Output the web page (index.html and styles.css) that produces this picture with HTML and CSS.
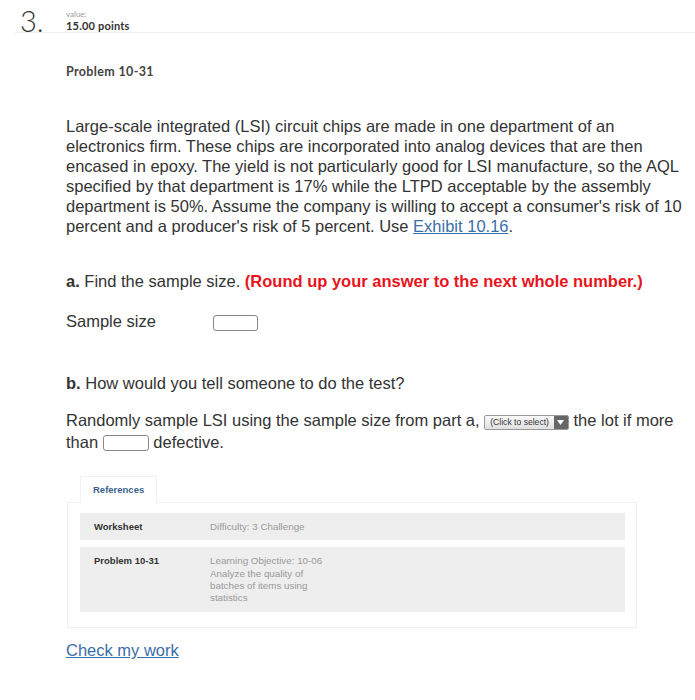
FILE: index.html
```html
<!DOCTYPE html>
<html>
<head>
<meta charset="utf-8">
<link rel="stylesheet" href="styles.css">
</head>
<body>
<div class="qhead">
  <div class="qnum">3.</div>
  <div class="qval">
    <div class="vlabel">value:</div>
    <div class="vpoints">15.00 points</div>
  </div>
</div>
<div class="main">
  <div class="ptitle">Problem 10-31</div>
  <p class="para">Large-scale integrated (LSI) circuit chips are made in one department of an electronics firm. These chips are incorporated into analog devices that are then encased in epoxy. The yield is not particularly good for LSI manufacture, so the AQL specified by that department is 17% while the LTPD acceptable by the assembly department is 50%. Assume the company is willing to accept a consumer's risk of 10 percent and a producer's risk of 5 percent. Use <a class="link" href="#">Exhibit 10.16</a>.</p>
  <p class="part"><b>a.</b> Find the sample size. <b class="red">(Round up your answer to the next whole number.)</b></p>
  <div class="srow"><span class="slabel">Sample size</span><span class="box box-a"></span></div>
  <p class="part partb"><b>b.</b> How would you tell someone to do the test?</p>
  <p class="para para2">Randomly sample LSI using the sample size from part a, <span class="sel"><span class="seltext">(Click to select)</span><span class="selbtn"><svg width="7" height="5" viewBox="0 0 7 5"><path d="M0 0h7L3.5 5z" fill="#fff"/></svg></span></span> the lot if more than <span class="box box-b"></span> defective.</p>
  <div class="refs">
    <div class="tab">References</div>
    <div class="refbox">
      <div class="refrow">
        <div class="rname">Worksheet</div>
        <div class="rinfo">Difficulty: 3 Challenge</div>
      </div>
      <div class="refrow">
        <div class="rname">Problem 10-31</div>
        <div class="rinfo">Learning Objective: 10-06<br>Analyze the quality of<br>batches of items using<br>statistics</div>
      </div>
    </div>
  </div>
  <a class="check" href="#">Check my work</a>
</div>
</body>
</html>
```
FILE: styles.css
```css
html, body { margin: 0; padding: 0; background: #fff; }
body { font-family: "Liberation Sans", Arial, sans-serif; color: #333; width: 695px; }
.qhead { display: flex; align-items: flex-start; margin-left: 15px; border-bottom: 1px solid #f0f0f0; height: 32px; }
.qnum { font-family: "Lato", sans-serif; font-weight: 300; font-size: 29px; line-height: 30px; color: #333; width: 51px; padding-left: 5px; margin-top: 6px; box-sizing: border-box; }
.qval { padding-top: 9px; }
.vlabel { font-family: "Lato", sans-serif; font-size: 8px; color: #999; line-height: 10px; }
.vpoints { font-family: "Lato", sans-serif; font-weight: 700; font-size: 11px; letter-spacing: 0.2px; color: #333; line-height: 13px; }
.main { padding-left: 66px; width: 620px; }
.ptitle { font-family: "Lato", sans-serif; font-weight: 700; font-size: 12.5px; letter-spacing: 0.35px; color: #444; margin-top: 32px; line-height: 14px; }
.para { font-size: 16.5px; line-height: 20px; margin: 37px 0 0; color: #333; }
.link { color: #3a6ea8; text-decoration: underline; }
.part { font-size: 16.5px; line-height: 20px; margin: 35px 0 0; }
.red { color: #e8141c; }
.srow { display: flex; align-items: center; margin-top: 20px; font-size: 16.5px; line-height: 20px; }
.slabel { width: 147px; }
.box { display: inline-block; border: 1px solid #888; border-radius: 3px; background: #fff; box-sizing: border-box; }
.box-a { width: 45px; height: 16px; margin-top: 3px; }
.partb { margin-top: 42px; }
.para2 { margin-top: 16px; line-height: 22px; }
.box-b { width: 46px; height: 16px; vertical-align: -3px; }
.sel { display: inline-flex; align-items: stretch; height: 15px; border: 1px solid #999; border-radius: 2px; background: linear-gradient(#fafafa, #e0e0e0); vertical-align: 1px; box-sizing: border-box; overflow: hidden; }
.seltext { font-size: 8.6px; line-height: 13px; padding: 0 5px 0 5px; color: #333; }
.selbtn { width: 14px; background: #666; display: flex; align-items: center; justify-content: center; }
.refs { margin-top: 22px; }
.tab { display: inline-block; margin-left: 14px; padding: 0 12px; height: 26px; line-height: 26px; font-size: 9.5px; font-weight: 700; color: #3b5f8f; border: 1px solid #f2f2f2; border-bottom: none; background: #fff; position: relative; top: 1px; }
.refbox { border: 1px solid #f0f0f0; width: 570px; padding: 10px 11px 15px 12px; box-sizing: border-box; margin-left: 1px; }
.refrow { display: flex; background: #eee; padding: 8px 14px 7px 14px; margin-bottom: 7px; font-size: 9.8px; line-height: 12.3px; }
.refrow:last-child { margin-bottom: 0; padding-bottom: 8px; }
.rname { width: 116px; font-weight: 700; font-size: 9.5px; color: #333; }
.rinfo { color: #999; }
.check { display: inline-block; margin-top: 12px; font-size: 16.5px; line-height: 20px; color: #3a6ea8; text-decoration: underline; }
```
